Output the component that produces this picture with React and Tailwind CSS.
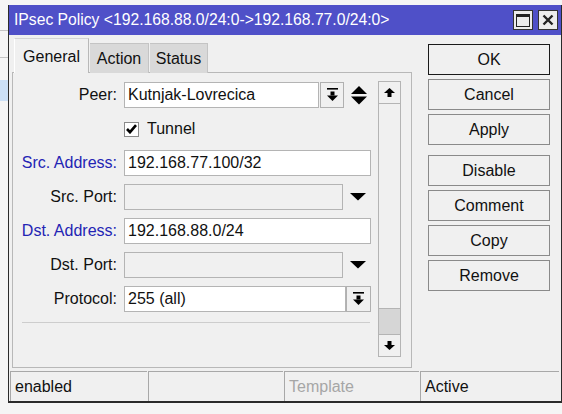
import React from 'react';

const BarDownIcon = () => (
  <svg width="11" height="14" viewBox="0 0 11 14">
    <rect x="0" y="0" width="11" height="1.6" fill="#000" />
    <rect x="3.5" y="3.5" width="4" height="4" fill="#000" />
    <polygon points="0,7.5 11,7.5 5.5,13" fill="#000" />
  </svg>
);

const UpDownIcon = () => (
  <svg width="16" height="19" viewBox="0 0 16 19">
    <polygon points="8,0 16,8 0,8" fill="#000" />
    <polygon points="0,10.5 16,10.5 8,18.5" fill="#000" />
  </svg>
);

const TriangleDown = () => (
  <svg width="16" height="8" viewBox="0 0 16 8">
    <polygon points="0,0 16,0 8,7.5" fill="#000" />
  </svg>
);

const ScrollArrow = ({ down }) => (
  <svg width="11" height="9" viewBox="0 0 11 9" style={{ transform: down ? 'rotate(180deg)' : undefined }}>
    <polygon points="5.5,0 11,5 0,5" fill="#000" />
    <rect x="3.5" y="5" width="4" height="4" fill="#000" />
  </svg>
);

function Field({ label, blue, children }) {
  return (
    <div className="flex h-[26px] items-center">
      <div className={`w-[105px] shrink-0 pr-[1px] text-right ${blue ? 'text-[#2424b4]' : 'text-[#111]'}`}>{label}</div>
      <div className="ml-[6px] flex h-full items-center">{children}</div>
    </div>
  );
}

function TextBox({ value, width, disabled }) {
  return (
    <div
      className={`flex h-[26px] items-center border border-[#b4b4b4] pl-[3px] ${disabled ? 'bg-[#f0f0f0]' : 'bg-white'}`}
      style={{ width }}
    >
      {value}
    </div>
  );
}

function SideButton({ children, primary }) {
  return (
    <div
      className={`flex h-[31px] w-[122px] items-center justify-center bg-[#f0f0f0] border ${primary ? 'border-[#1a1a1a]' : 'border-[#8a8a8a]'}`}
    >
      {children}
    </div>
  );
}

function StatusCell({ children, width, muted }) {
  return (
    <div
      className={`flex h-[30px] items-center border-t border-l border-[#a8a8a8] pl-[4px] ${muted ? 'text-[#a6a6a6]' : 'text-[#111]'}`}
      style={{ width }}
    >
      {children}
    </div>
  );
}

export default function App() {
  return (
    <div className="flex h-[414px] w-[562px] overflow-hidden bg-[#f5f5f5] font-['Liberation_Sans',Arial,sans-serif] text-[16px] leading-none text-[#111]">
      {/* list behind the window */}
      <div className="w-[8px] shrink-0">
        <div className="h-[30px]" />
        <div className="h-px bg-[#c4c4c4]" />
        <div className="h-[26px]" />
        <div className="h-px bg-[#c4c4c4]" />
        <div className="h-[22px]" />
        <div className="h-[21px] bg-[#cce0f6]" />
      </div>

      <div className="mt-[5px] flex h-[398px] w-[554px] shrink-0 flex-col border-l border-b-2 border-r border-[#2b2b2b] bg-[#f0f0f0]">
        {/* title bar */}
        <div className="flex h-[30px] shrink-0 items-center bg-[#4f50c8] pl-[5px] text-[15.7px] text-white">
          <span>IPsec Policy &lt;192.168.88.0/24:0-&gt;192.168.77.0/24:0&gt;</span>
          <div className="ml-auto mr-[3px] flex gap-[5px]">
            <div className="flex h-[20px] w-[20px] items-center justify-center border border-[#333] bg-[#ececec]">
              <div className="h-[13px] w-[14px] border border-t-[3px] border-[#222]" />
            </div>
            <div className="flex h-[20px] w-[20px] items-center justify-center border border-[#333] bg-[#ececec]">
              <svg width="12" height="12" viewBox="0 0 12 12">
                <path d="M1.5 1.5 L10.5 10.5 M10.5 1.5 L1.5 10.5" stroke="#222" strokeWidth="2.4" />
              </svg>
            </div>
          </div>
        </div>

        <div className="flex h-[333px] shrink-0">
          {/* tabs and form */}
          <div className="flex w-[403px] shrink-0 flex-col pl-[3px] pt-[3px]">
            <div className="relative z-10 -mb-px flex h-[35px] items-end pl-[2px]">
              <div className="flex h-[35px] w-[75px] items-center justify-center border-l border-t border-r border-l-white border-t-[#d4d4d4] border-r-[#b8b8b8] bg-[#f0f0f0] pt-[2px]">
                General
              </div>
              <div className="ml-px flex h-[30px] w-[59px] items-center justify-center border-t border-r border-[#c4c4c4] bg-[#d9d9d9]">
                Action
              </div>
              <div className="ml-px flex h-[30px] w-[58px] items-center justify-center border-t border-r border-[#c4c4c4] bg-[#d9d9d9]">
                Status
              </div>
            </div>

            <div className="flex h-[296px] w-[400px] border border-[#b8b8b8]">
              <div className="flex w-[365px] flex-col pt-[9px]">
                <Field label="Peer:">
                  <TextBox value="Kutnjak-Lovrecica" width={195} />
                  <div className="ml-px flex h-[26px] w-[24px] items-center justify-center border border-[#b0b0b0] bg-[#f0f0f0]">
                    <BarDownIcon />
                  </div>
                  <div className="ml-[7px]">
                    <UpDownIcon />
                  </div>
                </Field>
                <div className="mt-[8px] flex h-[26px] items-center pl-[111px]">
                  <div className="flex h-[15px] w-[15px] items-center justify-center border border-[#8a8a8a] bg-white">
                    <svg width="11" height="10" viewBox="0 0 11 10">
                      <path d="M1 5 L4 8.2 L10 1.2" fill="none" stroke="#000" strokeWidth="2.6" />
                    </svg>
                  </div>
                  <span className="ml-[8px]">Tunnel</span>
                </div>
                <div className="mt-[8px]">
                  <Field label="Src. Address:" blue>
                    <TextBox value="192.168.77.100/32" width={247} />
                  </Field>
                </div>
                <div className="mt-[8px]">
                  <Field label="Src. Port:">
                    <TextBox value="" width={219} disabled />
                    <div className="ml-[7px]">
                      <TriangleDown />
                    </div>
                  </Field>
                </div>
                <div className="mt-[8px]">
                  <Field label="Dst. Address:" blue>
                    <TextBox value="192.168.88.0/24" width={247} />
                  </Field>
                </div>
                <div className="mt-[8px]">
                  <Field label="Dst. Port:">
                    <TextBox value="" width={219} disabled />
                    <div className="ml-[7px]">
                      <TriangleDown />
                    </div>
                  </Field>
                </div>
                <div className="mt-[8px]">
                  <Field label="Protocol:">
                    <TextBox value="255 (all)" width={222} />
                    <div className="flex h-[26px] w-[25px] items-center justify-center border border-[#b0b0b0] bg-[#f0f0f0]">
                      <BarDownIcon />
                    </div>
                  </Field>
                </div>
                <div className="ml-[9px] mt-[10px] h-px w-[348px] bg-[#cdcdcd]" />
              </div>

              {/* scrollbar */}
              <div className="mt-[8px] flex h-[276px] w-[23px] flex-col border border-[#b4b4b4] bg-[#f0f0f0]">
                <div className="flex h-[22px] items-center justify-center border-b border-[#b4b4b4]">
                  <ScrollArrow />
                </div>
                <div className="flex-1" />
                <div className="h-[26px] border-t border-[#b4b4b4] bg-[#d6d6d6]" />
                <div className="flex h-[22px] items-center justify-center border-t border-[#b4b4b4]">
                  <ScrollArrow down />
                </div>
              </div>
            </div>
          </div>

          {/* buttons */}
          <div className="flex flex-col gap-[4px] pl-[16px] pt-[9px]">
            <SideButton primary>OK</SideButton>
            <SideButton>Cancel</SideButton>
            <SideButton>Apply</SideButton>
            <div className="h-[2px]" />
            <SideButton>Disable</SideButton>
            <SideButton>Comment</SideButton>
            <SideButton>Copy</SideButton>
            <SideButton>Remove</SideButton>
          </div>
        </div>

        {/* status bar */}
        <div className="mt-[3px] flex gap-px pl-px">
          <StatusCell width={137}>enabled</StatusCell>
          <StatusCell width={135} />
          <StatusCell width={135} muted>Template</StatusCell>
          <StatusCell width={139}>Active</StatusCell>
        </div>
      </div>
    </div>
  );
}
